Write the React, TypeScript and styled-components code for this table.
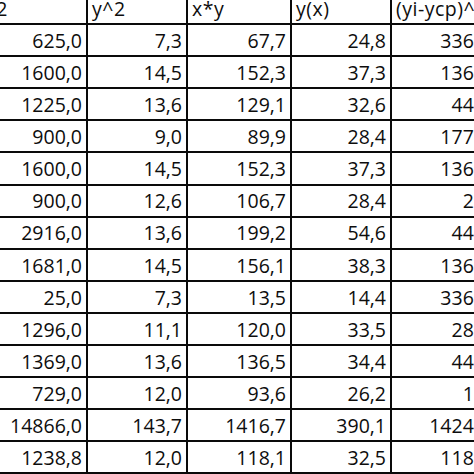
import React from "react";
import styled, { createGlobalStyle } from "styled-components";

const Global = createGlobalStyle`
  html, body { margin: 0; padding: 0; background: #ffffff; }
  body { width: 474px; height: 474px; overflow: hidden; }
`;

const Sheet = styled.div`
  margin-top: -7px;
  margin-left: -30px;
  font-family: "Open Sans", "Liberation Sans", sans-serif;
  font-size: 19.5px;
  font-weight: 500;
  color: #0d0d0d;
  width: 640px;
`;

const Row = styled.div`
  display: flex;
  height: 32.1px;
  box-sizing: border-box;
  border-bottom: 2.5px solid #0a0a0a;
`;

const Cell = styled.div<{ $w: number; $head?: boolean }>`
  flex: 0 0 ${(p) => p.$w}px;
  box-sizing: border-box;
  border-right: 2.5px solid #0a0a0a;
  display: flex;
  align-items: center;
  justify-content: ${(p) => (p.$head ? "flex-start" : "flex-end")};
  padding: ${(p) => (p.$head ? "1px 0 0 4px" : "1px 4px 0 0")};
  letter-spacing: ${(p) => (p.$head ? "0.5px" : "0")};
  white-space: nowrap;
  overflow: hidden;
  line-height: 1;
`;

const widths = [118, 100, 104, 100, 104];
const headers = ["x^2", "y^2", "x*y", "y(x)", "(yi-ycp)^2"];

const rows: string[][] = [
  ["625,0", "7,3", "67,7", "24,8", "336,4"],
  ["1600,0", "14,5", "152,3", "37,3", "136,1"],
  ["1225,0", "13,6", "129,1", "32,6", "44,2"],
  ["900,0", "9,0", "89,9", "28,4", "177,0"],
  ["1600,0", "14,5", "152,3", "37,3", "136,1"],
  ["900,0", "12,6", "106,7", "28,4", "2,3"],
  ["2916,0", "13,6", "199,2", "54,6", "44,2"],
  ["1681,0", "14,5", "156,1", "38,3", "136,1"],
  ["25,0", "7,3", "13,5", "14,4", "336,4"],
  ["1296,0", "11,1", "120,0", "33,5", "28,9"],
  ["1369,0", "13,6", "136,5", "34,4", "44,2"],
  ["729,0", "12,0", "93,6", "26,2", "1,4"],
  ["14866,0", "143,7", "1416,7", "390,1", "1424,9"],
  ["1238,8", "12,0", "118,1", "32,5", "118,7"],
];

export default function App() {
  return (
    <>
      <Global />
      <Sheet>
        <Row>
          {headers.map((h, i) => (
            <Cell key={i} $w={widths[i]} $head>
              {h}
            </Cell>
          ))}
        </Row>
        {rows.map((r, ri) => (
          <Row key={ri}>
            {r.map((v, ci) => (
              <Cell key={ci} $w={widths[ci]}>
                {v}
              </Cell>
            ))}
          </Row>
        ))}
      </Sheet>
    </>
  );
}
